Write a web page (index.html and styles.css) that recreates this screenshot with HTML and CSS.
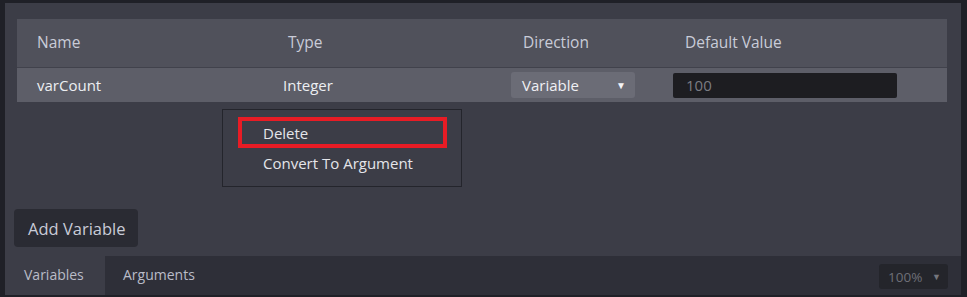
FILE: index.html
```html
<!DOCTYPE html>
<html>
<head>
<meta charset="utf-8">
<link rel="stylesheet" href="styles.css">
</head>
<body>
<div class="frame">
  <div class="panel">
    <div class="content">
      <div class="table">
        <div class="row head">
          <div class="cell c-name">Name</div>
          <div class="cell c-type">Type</div>
          <div class="cell c-dir">Direction</div>
          <div class="cell c-def">Default Value</div>
        </div>
        <div class="row data">
          <div class="cell c-name">varCount</div>
          <div class="cell c-type2">Integer</div>
          <div class="cell c-dir2"><div class="select"><span>Variable</span><span class="arrow">▼</span></div></div>
          <div class="cell c-def2"><div class="input">100</div></div>
        </div>
      </div>
      <div class="menu">
        <div class="menu-item highlight">Delete</div>
        <div class="menu-item">Convert To Argument</div>
      </div>
      <div class="actions">
        <button class="add-btn">Add Variable</button>
      </div>
    </div>
    <div class="tabbar">
      <div class="tab active">Variables</div>
      <div class="tab">Arguments</div>
      <div class="zoom"><span>100%</span><span class="zarrow">▼</span></div>
    </div>
  </div>
</div>
</body>
</html>
```
FILE: styles.css
```css
* { box-sizing: border-box; }
html, body { margin: 0; padding: 0; }
body {
  background: #1f2027;
  width: 967px;
  height: 297px;
  overflow: hidden;
  font-family: "Open Sans", "Noto Sans", sans-serif;
  font-size: 15px;
}
.frame {
  padding: 3px 6px 2px 5px;
  height: 297px;
}
.panel {
  background: #3c3d47;
  height: 292px;
  display: flex;
  flex-direction: column;
}
.content {
  position: relative;
  flex: 1;
  padding: 16px 14px 0 12px;
  display: flex;
  flex-direction: column;
}
.table { display: flex; flex-direction: column; }
.row {
  display: grid;
  grid-template-columns: 251px 235px 162px 1fr;
  align-items: center;
}
.row.head {
  background: #50515b;
  height: 49px;
  border-bottom: 1px solid #41424c;
  color: #c9ccd8;
  padding-bottom: 2px;
  font-size: 15.5px;
}
.row.data {
  background: #5d5e68;
  height: 34px;
  color: #eceef2;
}
.c-name, .c-type, .c-dir, .c-def { padding-left: 20px; }
.c-type2 { padding-left: 15px; }
.c-dir2, .c-def2 { padding-left: 8px; }
.select {
  width: 124px;
  height: 26px;
  background: #6b6c76;
  border-radius: 3px;
  display: flex;
  align-items: center;
  justify-content: space-between;
  padding: 0 9px 0 11px;
  color: #f0f0f4;
}
.select .arrow { font-size: 10px; color: #f4f4f6; }
.input {
  width: 224px;
  height: 25px;
  background: #1d1d21;
  border-radius: 2px;
  color: #7b7c83;
  padding-left: 13px;
  display: flex;
  align-items: center;
}
.menu {
  position: absolute;
  left: 217px;
  top: 106px;
  width: 240px;
  height: 78px;
  border: 1px solid #24252c;
  background: #3c3d47;
  padding: 7px 0 0 15px;
  color: #e4e5ea;
}
.menu-item {
  height: 30px;
  display: flex;
  align-items: center;
  padding-left: 21px;
  width: 209px;
  border: 4px solid transparent;
}
.menu-item.highlight { border-color: #e81c25; height: 31px; }
.actions {
  margin-top: auto;
  padding-bottom: 9px;
  margin-left: -3px;
}
.add-btn {
  font: inherit;
  font-size: 16.5px;
  width: 124px;
  height: 38px;
  background: #2a2b33;
  border: none;
  border-radius: 4px;
  color: #c9ccd8;
  padding: 0 0 0 14px;
  text-align: left;
}
.tabbar {
  height: 39px;
  background: #2e2f38;
  display: flex;
  align-items: stretch;
  font-size: 14px;
  color: #b9bcc8;
}
.tab {
  display: flex;
  align-items: center;
  padding: 0 19px 2px 19px;
}
.tab.active { background: #3c3d47; width: 100px; }
.tab:not(.active) { padding-left: 18px; }
.zoom {
  margin-left: auto;
  margin-right: 13px;
  align-self: center;
  margin-top: 2px;
  width: 69px;
  height: 25px;
  background: #24252b;
  border-radius: 3px;
  display: flex;
  align-items: center;
  justify-content: space-between;
  padding: 0 7px 0 9px;
  color: #6e6f77;
  font-size: 13.5px;
}
.zarrow { font-size: 9px; color: #75767d; }
```
